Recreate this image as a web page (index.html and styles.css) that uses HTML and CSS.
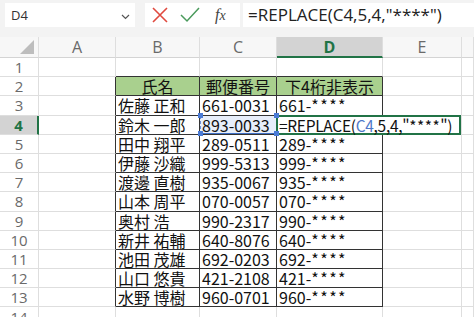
FILE: index.html
```html
<!DOCTYPE html>
<html lang="ja">
<head>
    <meta charset="UTF-8">
    <title>REPLACE</title>
    <link rel="stylesheet" href="styles.css">
</head>
<body>
    <!-- barra de fórmulas -->
    <div class="toolbar">
        <div class="namebox">
            <span>D4</span>
            <svg class="chev" width="9" height="6" viewBox="0 0 9 6"><path d="M1 1 L4.5 4.5 L8 1" fill="none" stroke="#555" stroke-width="1.2"/></svg>
        </div>
        <div class="buttons">
            <svg width="18" height="18" viewBox="0 0 18 18"><path d="M2 2 L16 16 M16 2 L2 16" stroke="#e04a3f" stroke-width="1.6" fill="none"/></svg>
            <svg width="22" height="18" viewBox="0 0 22 18"><path d="M2 9 L8 15 L20 2" stroke="#4a9a5c" stroke-width="1.5" fill="none"/></svg>
            <span class="fx"><i>f</i><i>x</i></span>
        </div>
        <div class="formula">=REPLACE(C4,5,4,"****")</div>
    </div>

    <!-- planilha -->
    <table class="sheet">
        <colgroup>
            <col class="c-head"><col class="c-a"><col class="c-b"><col class="c-c"><col class="c-d"><col class="c-e"><col class="c-f">
        </colgroup>
        <tr class="colhead">
            <th class="corner"><span class="tri"></span></th>
            <th>A</th><th>B</th><th>C</th><th class="active">D</th><th>E</th><th></th>
        </tr>
        <tr><th>1</th><td></td><td class="tt"></td><td class="tt"></td><td class="tt"></td><td></td><td></td></tr>
        <tr><th>2</th><td class="tl"></td><td class="hd tb">氏名</td><td class="hd tb">郵便番号</td><td class="hd tb">下4桁非表示</td><td></td><td></td></tr>
        <tr><th>3</th><td class="tl"></td><td class="tb">佐藤 正和</td><td class="tb">661-0031</td><td class="tb">661-<span class="ast">****</span></td><td></td><td></td></tr>
        <tr class="cur">
            <th class="active">4</th><td class="tl"></td><td class="tb">鈴木 一郎</td>
            <td class="tb ref"><div class="refbox">893-0033<i class="h tl-h"></i><i class="h bl-h"></i><i class="h tr-h"></i><i class="h br-h"></i></div></td>
            <td class="edit" colspan="2"><div class="editbox">=REPLACE(<span class="blue">C4</span>,5,4,"<span class="ast">****</span>")</div></td><td></td>
        </tr>
        <tr><th>5</th><td class="tl"></td><td class="tb">田中 翔平</td><td class="tb">289-0511</td><td class="tb">289-<span class="ast">****</span></td><td></td><td></td></tr>
        <tr><th>6</th><td class="tl"></td><td class="tb">伊藤 沙織</td><td class="tb">999-5313</td><td class="tb">999-<span class="ast">****</span></td><td></td><td></td></tr>
        <tr><th>7</th><td class="tl"></td><td class="tb">渡邊 直樹</td><td class="tb">935-0067</td><td class="tb">935-<span class="ast">****</span></td><td></td><td></td></tr>
        <tr><th>8</th><td class="tl"></td><td class="tb">山本 周平</td><td class="tb">070-0057</td><td class="tb">070-<span class="ast">****</span></td><td></td><td></td></tr>
        <tr><th>9</th><td class="tl"></td><td class="tb">奥村 浩</td><td class="tb">990-2317</td><td class="tb">990-<span class="ast">****</span></td><td></td><td></td></tr>
        <tr><th>10</th><td class="tl"></td><td class="tb">新井 祐輔</td><td class="tb">640-8076</td><td class="tb">640-<span class="ast">****</span></td><td></td><td></td></tr>
        <tr><th>11</th><td class="tl"></td><td class="tb">池田 茂雄</td><td class="tb">692-0203</td><td class="tb">692-<span class="ast">****</span></td><td></td><td></td></tr>
        <tr><th>12</th><td class="tl"></td><td class="tb">山口 悠貴</td><td class="tb">421-2108</td><td class="tb">421-<span class="ast">****</span></td><td></td><td></td></tr>
        <tr><th>13</th><td class="tl"></td><td class="tb">水野 博樹</td><td class="tb">960-0701</td><td class="tb">960-<span class="ast">****</span></td><td></td><td></td></tr>
        <tr><th>14</th><td></td><td></td><td></td><td></td><td></td><td></td></tr>
    </table>
</body>
</html>
```

FILE: styles.css
```css
body {
    margin: 0;
    width: 474px;
    height: 317px;
    overflow: hidden;
    background: #fff;
    font-family: "Noto Sans CJK JP", sans-serif;
}

.toolbar {
    display: flex;
    height: 37px;
    padding: 3px 0 0 5px;
    box-sizing: border-box;
    background: #f3f3f3;
}

.namebox {
    width: 130px;
    height: 24px;
    background: #fff;
    display: flex;
    align-items: center;
    justify-content: space-between;
    padding: 0 5px 0 6px;
    box-sizing: border-box;
    font-family: "Open Sans", sans-serif;
    font-size: 13px;
    color: #333;
}

.chev {
    margin-top: 3px;
}

.buttons {
    width: 95px;
    height: 24px;
    margin-left: 10px;
    background: #fff;
    display: flex;
    align-items: center;
    gap: 10px;
    padding-left: 6px;
    box-sizing: border-box;
}

.fx {
    font-family: "Liberation Serif", serif;
    font-size: 16px;
    color: #444;
    margin-left: 4px;
}

.fx i + i {
    font-size: 14px;
}

.formula {
    flex: 1;
    height: 24px;
    margin-left: 3px;
    background: #fff;
    padding-left: 5px;
    font-family: "Open Sans", sans-serif;
    font-size: 17px;
    line-height: 24px;
    color: #222;
    white-space: nowrap;
}

.sheet {
    table-layout: fixed;
    border-collapse: separate;
    border-spacing: 0;
    width: 474px;
}

.c-head { width: 39px; }
.c-a { width: 77px; }
.c-b { width: 84px; }
.c-c { width: 77px; }
.c-d { width: 106px; }
.c-e { width: 79px; }
.c-f { width: 12px; }

.sheet th,
.sheet td {
    height: 18.2px;
    padding: 0;
    border-right: 1px solid #dedede;
    border-bottom: 1px solid #dedede;
    white-space: nowrap;
    overflow: visible;
    font-weight: normal;
    line-height: 18px;
}

.sheet th {
    font-family: "Open Sans", sans-serif;
    font-size: 15px;
    color: #6a6a6a;
    text-align: center;
    background: #fff;
}

.colhead th {
    height: 19px;
    font-size: 16px;
    background: #f7f7f7;
    border-bottom-color: #d4d4d4;
}

.sheet th.active {
    background: #d3d3d3;
    color: #217346;
    font-weight: bold;
}

.colhead th.active {
    border-bottom: 2px solid #217346;
}

.cur th.active {
    border-right: 2px solid #217346;
}

.corner {
    position: relative;
}

.tri {
    position: absolute;
    right: 4px;
    bottom: 3px;
    width: 0;
    height: 0;
    border-left: 14px solid transparent;
    border-bottom: 14px solid #bdbdbd;
}

.sheet td {
    font-size: 16px;
    color: #111;
    padding-left: 2px;
}

.ast {
    letter-spacing: 1.5px;
}

.sheet td.tt {
    border-bottom-color: #333;
}

.sheet td.tl {
    border-right-color: #333;
}

.sheet td.tb {
    border-right-color: #333;
    border-bottom-color: #333;
}

.sheet td.hd {
    background: #a9d08e;
    text-align: center;
    padding-left: 0;
}

.sheet td.ref {
    padding: 0;
}

.refbox {
    position: relative;
    height: 18px;
    background: #e7eefa;
    border-bottom: 1px solid #3f6fc4;
    border-left: 1px dashed #6a8fd6;
    padding-left: 1px;
    box-sizing: border-box;
}

.h {
    position: absolute;
    width: 5px;
    height: 5px;
    background: #4a7bd6;
}

.tl-h { left: -3px; top: -3px; }
.bl-h { left: -3px; bottom: -3px; }
.tr-h { right: -3px; top: -3px; }
.br-h { right: -3px; bottom: -3px; }

.sheet td.edit {
    padding: 0;
    border-right-color: #dedede;
}

.editbox {
    height: 20px;
    margin: -1px 0 -2px -1px;
    border: 2px solid #217346;
    box-sizing: border-box;
    line-height: 16px;
    padding-left: 1px;
    font-size: 15.5px;
    letter-spacing: -0.3px;
    background: #fff;
}

.editbox .ast {
    letter-spacing: 0.5px;
}

.blue {
    color: #4f79c9;
}
```
